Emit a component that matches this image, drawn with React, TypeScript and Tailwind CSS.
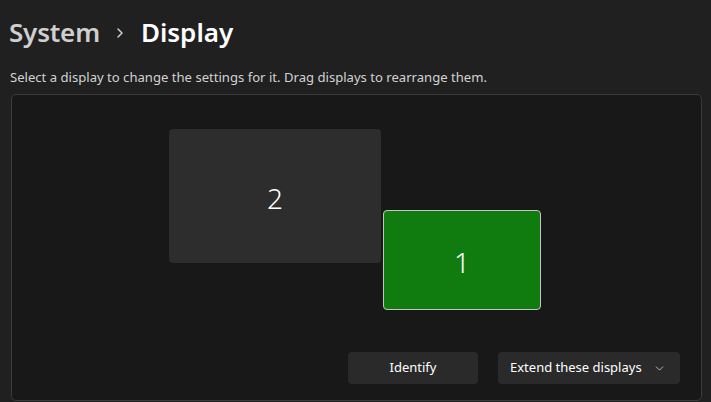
import { ChevronRight, ChevronDown } from 'lucide-react';

export default function App() {
  return (
    <div
      className="w-[711px] h-[402px] overflow-hidden bg-[#202020] text-white"
      style={{ fontFamily: '"Noto Sans", "Open Sans", sans-serif' }}
    >
      {/* Breadcrumb */}
      <div className="flex items-center h-[62px] pl-[9px] pt-[2px]">
        <span className="text-[26px] font-semibold text-[#cfcfcf] tracking-[-0.2px]">System</span>
        <ChevronRight size={16} strokeWidth={2.2} className="ml-[12px] mr-[13px] mt-[2px] text-[#cfcfcf]" />
        <span className="text-[26px] font-semibold text-white tracking-[0px]">Display</span>
      </div>

      <p className="pl-[10px] text-[13.1px] text-[#d2d2d2] leading-[18px] mt-[6px]">
        Select a display to change the settings for it. Drag displays to rearrange them.
      </p>

      {/* Arrangement panel */}
      <div className="mt-[8px] ml-[11px] w-[691px] h-[307px] rounded-[5px] border border-[#3b3b3b] bg-[#181818] flex flex-col">
        <div className="relative h-[257px]">
          <div className="absolute left-[157px] top-[34px] w-[212px] h-[134px] rounded-[4px] bg-[#2d2d2d] flex items-center justify-center">
            <span className="text-[28px] font-light leading-none pt-[4px] text-white">2</span>
          </div>
          <div className="absolute left-[371px] top-[115px] w-[158px] h-[100px] rounded-[4px] border border-[#c4c4c4] bg-[#107c10] flex items-center justify-center">
            <span className="text-[28px] font-light leading-none pt-[4px] text-white">1</span>
          </div>
        </div>
        <div className="flex justify-end gap-[20px] pr-[21px]">
          <button className="w-[130px] h-[32px] rounded-[4px] bg-[#2a2a2a] text-[13px] text-white">
            Identify
          </button>
          <button className="w-[182px] h-[32px] rounded-[4px] bg-[#2a2a2a] text-[13px] text-white flex items-center pl-[12px] pr-[14px]">
            <span className="flex-1 text-left">Extend these displays</span>
            <ChevronDown size={13} strokeWidth={1.6} className="text-[#cfcfcf]" />
          </button>
        </div>
      </div>
    </div>
  );
}
